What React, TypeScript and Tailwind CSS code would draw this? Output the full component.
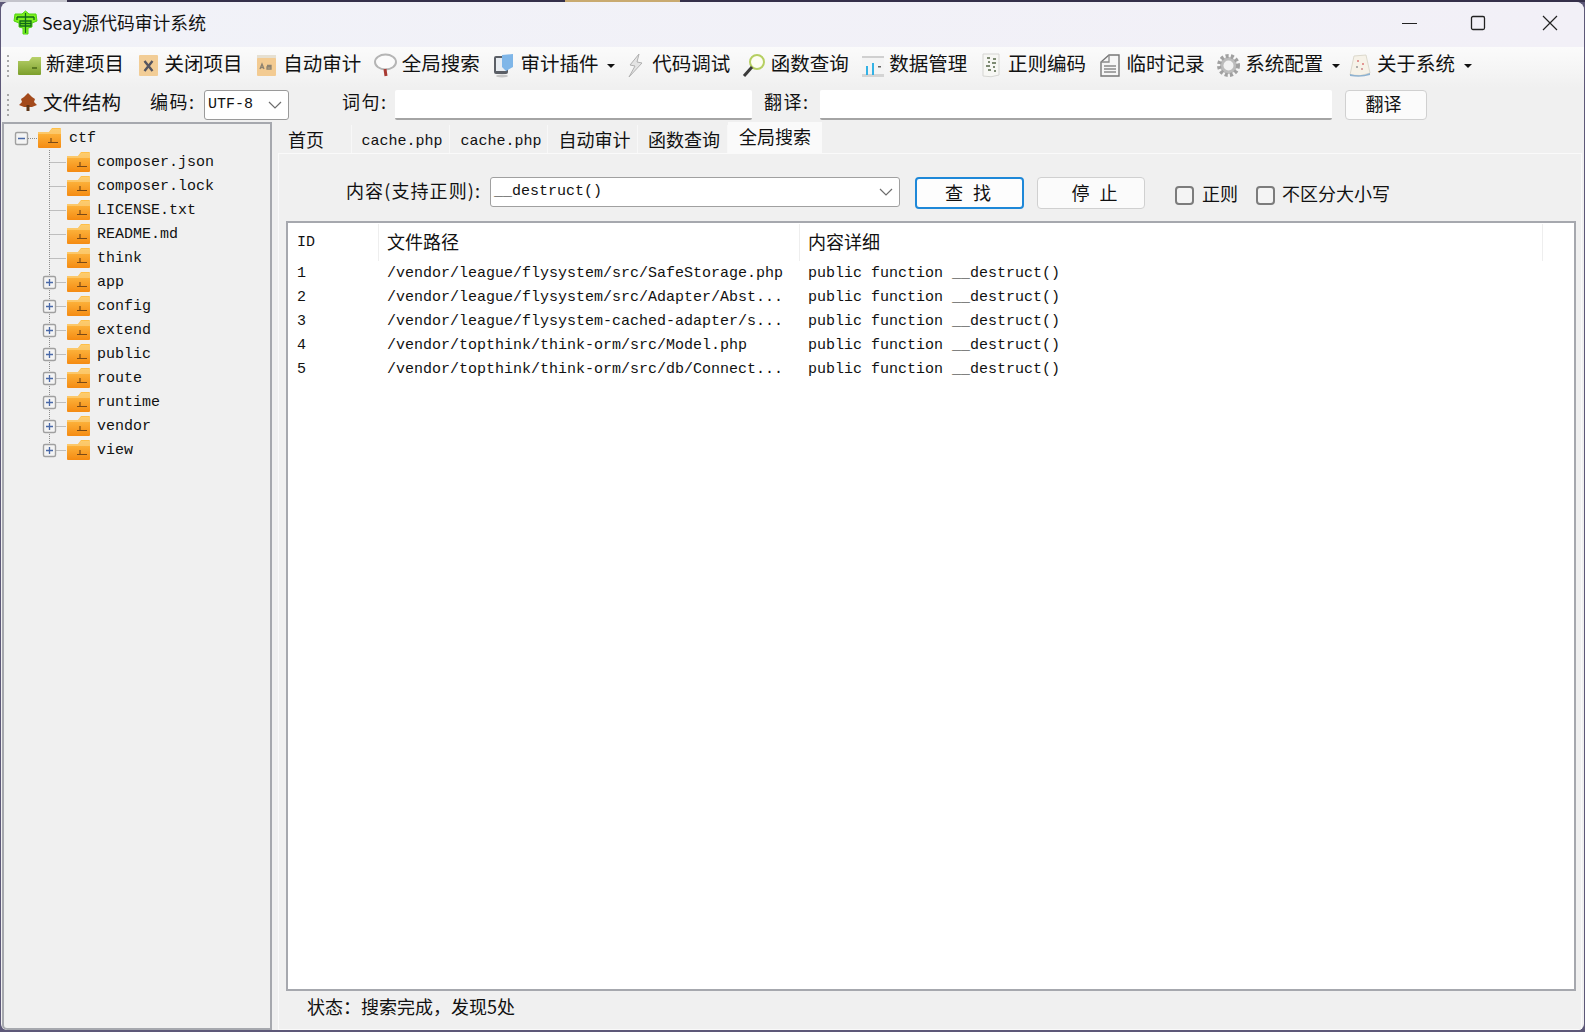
// Seay source audit window: title bar, two toolbars, file tree, global search tab
import React from 'react';

function AppIcon() {
  return (
    <svg width="25" height="25" viewBox="0 0 25 25" fill="none">
      <path d="M12.5 1 L16 4 L23 4 L24 11 L19 13 L19 17 L15 18 L15 24 L10 24 L10 18 L6 17 L6 13 L1 11 L2 4 L9 4 Z" fill="#7ef01e" stroke="#4fd410" strokeWidth="1" />
      <path d="M4 7 H21 M4 7 V10 M21 7 V10 M7 11 H18 V16 H7 Z M12.5 3 V23 M7 13.5 H18" stroke="#0f6a18" strokeWidth="1.3" />
    </svg>
  );
}

function NewIcon() {
  return (
    <svg width="25" height="20" viewBox="0 0 25 20">
      <defs>
        <linearGradient id="ng" x1="0" y1="0" x2="0" y2="1">
          <stop offset="0" stopColor="#b8d16a" />
          <stop offset="1" stopColor="#7c9f2c" />
        </linearGradient>
      </defs>
      <path d="M1 5 H12 L15 1 H24 V18 Q24 19 23 19 H2 Q1 19 1 18 Z" fill="url(#ng)" />
      <rect x="15" y="11" width="5" height="2" fill="#5b7a22" />
    </svg>
  );
}

function CloseProjectIcon() {
  return (
    <svg width="21" height="23" viewBox="0 0 21 23">
      <rect x="1" y="1" width="19" height="21" rx="1" fill="#f2cd96" />
      <path d="M6.5 7 L14.5 17 M14.5 7 L6.5 17" stroke="#555560" strokeWidth="2.4" />
    </svg>
  );
}

function AuditIcon() {
  return (
    <svg width="21" height="23" viewBox="0 0 21 23">
      <rect x="1" y="1" width="19" height="4" fill="#e6e0d2" />
      <rect x="1" y="4" width="19" height="18" rx="1" fill="#f3cb92" />
      <path d="M4 15 L6 10 L8 15 M5 13.5 H7 M11 11.5 H15 V15 H11 V13 H15" stroke="#8d8270" strokeWidth="1.3" fill="none" />
    </svg>
  );
}

function GlobeSearchIcon() {
  return (
    <svg width="25" height="25" viewBox="0 0 25 25">
      <ellipse cx="12.5" cy="9" rx="10.5" ry="7.5" fill="#fbfbfb" stroke="#b5b5b5" strokeWidth="2" />
      <path d="M12 16 L13 23" stroke="#a83a32" strokeWidth="3" />
    </svg>
  );
}

function PluginIcon() {
  return (
    <svg width="21" height="25" viewBox="0 0 21 25">
      <rect x="1" y="3" width="14" height="18" rx="2" fill="#5b5f66" />
      <rect x="3" y="5" width="10" height="13" fill="#e8edf2" />
      <path d="M9 2 L20 1 V14 L13 18 L9 14 Z" fill="#7fb6e8" />
      <ellipse cx="9" cy="23" rx="6" ry="1.5" fill="#c5c5c5" />
    </svg>
  );
}

function BoltIcon() {
  return (
    <svg width="18" height="25" viewBox="0 0 18 25">
      <path d="M12 1 L3 12 L8 13 L2 24 L15 10 L10 9 Z" fill="#e4e4e4" stroke="#b0b0b0" strokeWidth="1" />
    </svg>
  );
}

function MagnifierIcon() {
  return (
    <svg width="24" height="25" viewBox="0 0 24 25">
      <circle cx="15" cy="9" r="7" fill="#fdfdf2" stroke="#b6cf62" strokeWidth="2" />
      <path d="M10 14 L2 23" stroke="#3a3a3a" strokeWidth="3" />
    </svg>
  );
}

function DataIcon() {
  return (
    <svg width="24" height="24" viewBox="0 0 24 24">
      <rect x="1" y="2" width="22" height="2" fill="#d0d0d0" />
      <rect x="1" y="4" width="22" height="19" fill="#f4f4f4" />
      <rect x="1" y="20" width="22" height="3" fill="#d4d4d4" />
      <rect x="5" y="12" width="2" height="9" fill="#33b2e5" />
      <rect x="11" y="9" width="2" height="12" fill="#33b2e5" />
      <rect x="17" y="12" width="3" height="1.5" fill="#666" />
    </svg>
  );
}

function RegexIcon() {
  return (
    <svg width="20" height="26" viewBox="0 0 20 26">
      <path d="M2 1 H18 V22 Q10 25 2 23 Z" fill="#f7f7f4" stroke="#d5d5d2" />
      <path d="M6 5 h3 M12 6 h3 M7 9 h2 M11 10 h4 M5 13 h4 M12 14 h2 M7 17 h3 M13 18 h2" stroke="#7d8a72" strokeWidth="2" />
    </svg>
  );
}

function NoteIcon() {
  return (
    <svg width="22" height="25" viewBox="0 0 22 25" fill="none">
      <path d="M10 2 H20 V23 H2 V9 Z" fill="#f6f6f6" stroke="#777" strokeWidth="1.4" />
      <path d="M10 2 V9 H2 M5 13 H17 M5 16 H17 M5 19 H17" stroke="#8a8a8a" strokeWidth="1.3" />
    </svg>
  );
}

function GearIcon() {
  return (
    <svg width="25" height="25" viewBox="0 0 25 25" fill="none">
      <circle cx="12.5" cy="12.5" r="8.5" fill="#bcbcbc" />
      <circle cx="12.5" cy="12.5" r="9.5" stroke="#a0a0a0" strokeWidth="4" strokeDasharray="3 2.2" />
      <circle cx="12.5" cy="12.5" r="5" fill="#f2f2f2" />
    </svg>
  );
}

function AboutIcon() {
  return (
    <svg width="22" height="23" viewBox="0 0 22 23">
      <path d="M5 2 L17 1 L21 19 Q12 23 1 21 Z" fill="#f6f2e8" stroke="#dcd8cc" />
      <path d="M1 20 Q12 23 21 19 V21 Q12 24 1 22 Z" fill="#8fb2d0" />
      <circle cx="9" cy="7" r="1" fill="#d77" />
      <circle cx="14" cy="10" r="1" fill="#d77" />
      <circle cx="8" cy="13" r="1" fill="#999" />
      <circle cx="13" cy="15" r="1" fill="#c88" />
    </svg>
  );
}

function TreeIcon() {
  return (
    <svg width="20" height="20" viewBox="0 0 20 20">
      <path d="M10 1 L14 5 L17 7 L16 10 L19 13 L14 15 L6 15 L1 13 L4 10 L3 7 L6 5 Z" fill="#a34a1c" />
      <rect x="8.5" y="13" width="3" height="6" fill="#5d3417" />
    </svg>
  );
}

function FolderIcon() {
  return (
    <svg width="23" height="20" viewBox="0 0 23 20" className="shrink-0">
      <defs>
        <linearGradient id="fg" x1="0" y1="0" x2="0" y2="1">
          <stop offset="0" stopColor="#ffc04a" />
          <stop offset="1" stopColor="#f58b12" />
        </linearGradient>
      </defs>
      <path d="M0 4 H11 L14 0 H22 Q23 0 23 1 V19 Q23 20 22 20 H1 Q0 20 0 19 Z" fill="url(#fg)" />
      <path d="M0 4 H11 L14 1 H23 V6 H0 Z" fill="#fcd98e" opacity="0.55" />
      <path d="M13 10 V14 M10 14.5 H20" stroke="#7a4a16" strokeWidth="1.2" />
    </svg>
  );
}

function Caret() {
  return <span className="ml-[9px] w-0 h-0 border-x-[4px] border-x-transparent border-t-[4px] border-t-[#111]" />;
}

function Chevron({ className }: { className?: string }) {
  return (
    <svg width="14" height="8" viewBox="0 0 14 8" fill="none" className={className}>
      <path d="M1 1 L7 7 L13 1" stroke="#6d6d6d" strokeWidth="1.2" />
    </svg>
  );
}

function Grip() {
  return (
    <div className="flex flex-col gap-[3px] w-[3px] shrink-0 ml-[6px]">
      {[...Array(5)].map((_, i) => (
        <div key={i} className="w-[2px] h-[2px] bg-[#a8a8a8]" />
      ))}
    </div>
  );
}

// toolbar buttons
const tools = [
  { label: '新建项目', icon: <NewIcon /> },
  { label: '关闭项目', icon: <CloseProjectIcon /> },
  { label: '自动审计', icon: <AuditIcon /> },
  { label: '全局搜索', icon: <GlobeSearchIcon /> },
  { label: '审计插件', icon: <PluginIcon />, menu: true },
  { label: '代码调试', icon: <BoltIcon /> },
  { label: '函数查询', icon: <MagnifierIcon /> },
  { label: '数据管理', icon: <DataIcon /> },
  { label: '正则编码', icon: <RegexIcon /> },
  { label: '临时记录', icon: <NoteIcon /> },
  { label: '系统配置', icon: <GearIcon />, menu: true },
  { label: '关于系统', icon: <AboutIcon />, menu: true },
];

const treeFiles = ['composer.json', 'composer.lock', 'LICENSE.txt', 'README.md', 'think'];
const treeDirs = ['app', 'config', 'extend', 'public', 'route', 'runtime', 'vendor', 'view'];

const results = [
  '/vendor/league/flysystem/src/SafeStorage.php',
  '/vendor/league/flysystem/src/Adapter/Abst...',
  '/vendor/league/flysystem-cached-adapter/s...',
  '/vendor/topthink/think-orm/src/Model.php',
  '/vendor/topthink/think-orm/src/db/Connect...',
];

// dotted connector + optional plus box in front of a tree row
function TreeGutter({ plus, last }: { plus?: boolean; last?: boolean }) {
  return (
    <svg width="63" height="24" viewBox="0 0 63 24" className="shrink-0">
      <path d={last ? 'M45.5 0 V12' : 'M45.5 0 V24'} stroke="#8c8c8c" strokeDasharray="1 1" />
      <path d="M45.5 12.5 H62" stroke="#8c8c8c" strokeDasharray="1 1" />
      {plus && (
        <>
          <rect x="39.5" y="6.5" width="12" height="12" rx="1.5" fill="#f4f4f4" stroke="#a0a0a0" strokeWidth="1.4" />
          <path d="M42 12.5 H49 M45.5 9 V16" stroke="#4a69a8" strokeWidth="1.3" />
        </>
      )}
    </svg>
  );
}

function ResultRow({ id, path }: { id: number; path: string }) {
  return (
    <div className="flex h-[24px] items-center">
      <div className="w-[99px] pl-[9px]">{id}</div>
      <div className="w-[421px] whitespace-pre">{path}</div>
      <div className="whitespace-pre">public function __destruct()</div>
    </div>
  );
}

export default function App() {
  return (
    <div className="w-[1585px] h-[1032px] flex flex-col overflow-hidden bg-[#5d5878] font-['Noto_Sans_CJK_SC',sans-serif] text-[#111]">
      {/* desktop peeking out above the window */}
      <div className="flex h-[2px] shrink-0 bg-[#35304a]">
        <div className="w-[67px] bg-[#c4c4cc]" />
        <div className="w-[498px]" />
        <div className="w-[115px] bg-[#c9aa70]" />
      </div>

      <div className="flex-1 min-h-0 flex flex-col mx-[1px] mb-[2px] rounded-t-[8px] rounded-b-[6px] overflow-hidden bg-[#f0f0f0]">
        {/* title bar */}
        <div className="h-[45px] shrink-0 flex items-center bg-[linear-gradient(90deg,#f1f2f8,#f2f0f7)]">
          <div className="ml-[12px] mt-[-4px]"><AppIcon /></div>
          <span className="ml-[4px] text-[17.8px] leading-none mt-[-3px]">Seay源代码审计系统</span>
          <div className="ml-auto flex items-center mt-[-3px]">
            <svg width="16" height="16" viewBox="0 0 16 16" fill="none" className="mr-[52px]">
              <path d="M0 8.5 H15" stroke="#222" />
            </svg>
            <svg width="16" height="16" viewBox="0 0 16 16" fill="none" className="mr-[56px]">
              <rect x="1.5" y="1.5" width="13" height="13" rx="1.5" stroke="#222" strokeWidth="1.3" />
            </svg>
            <svg width="16" height="16" viewBox="0 0 16 16" fill="none" className="mr-[26px]">
              <path d="M1 1 L15 15 M15 1 L1 15" stroke="#222" strokeWidth="1.2" />
            </svg>
          </div>
        </div>

        {/* main toolbar */}
        <div className="h-[41px] shrink-0 flex items-center pb-[4px] bg-[linear-gradient(180deg,#fbfbfb,#f0f0f0)]">
          <Grip />
          <div className="flex items-center ml-[3px] text-[19.5px] leading-none">
            {tools.map((t) => (
              <div key={t.label} className={t.menu ? 'w-[131.8px] flex items-center' : 'w-[118.6px] flex items-center'}>
                <div className="w-[33px] h-[26px] flex items-center justify-center shrink-0">{t.icon}</div>
                <span className="whitespace-nowrap mt-[-5px]">{t.label}</span>
                {t.menu && <Caret />}
              </div>
            ))}
          </div>
        </div>

        {/* second toolbar */}
        <div className="h-[34px] shrink-0 flex items-center">
          <Grip />
          <div className="ml-[8px] mt-[-6px]"><TreeIcon /></div>
          <span className="ml-[5px] text-[19.5px] leading-none mt-[-7px]">文件结构</span>
          <span className="ml-[29px] text-[18px] w-[54px] tracking-[1.5px] mt-[-7px]">编码:</span>
          <div className="w-[85px] h-[30px] flex items-center justify-between bg-white border border-[#9a9a9a] rounded-[3px] pl-[3px] pr-[6px] font-['Liberation_Mono','Noto_Sans_CJK_SC',monospace] text-[15px]">
            <span>UTF-8</span>
            <Chevron />
          </div>
          <span className="ml-[53px] text-[18px] w-[53px] tracking-[1.5px] mt-[-7px]">词句:</span>
          <div className="w-[357px] h-[30px] bg-white border-b-2 border-[#a4a4a4] rounded-[2px]" />
          <span className="ml-[12px] text-[18px] w-[56px] tracking-[1.5px] mt-[-7px]">翻译:</span>
          <div className="w-[512px] h-[30px] bg-white border-b-2 border-[#a4a4a4] rounded-[2px]" />
          <button className="ml-[13px] w-[82px] h-[30px] bg-[#fbfbfb] border border-[#d0d0d0] rounded-[4px] text-[18px] leading-none pb-[4px] pr-[5px]">翻译</button>
        </div>

        {/* body */}
        <div className="flex-1 min-h-0 flex">
          {/* file tree */}
          <div className="w-[270px] ml-[1px] shrink-0 border-2 border-[#a6a8ae] rounded-bl-[5px] pt-[2px] bg-[#f0f0f0] font-['Liberation_Mono','Noto_Sans_CJK_SC',monospace] text-[15px] leading-none">
            <div className="flex items-center h-[24px]">
              <svg width="34" height="24" viewBox="0 0 34 24" className="shrink-0">
                <rect x="11.5" y="6.5" width="12" height="12" rx="1.5" fill="#f4f4f4" stroke="#a0a0a0" strokeWidth="1.4" />
                <path d="M14 12.5 H21" stroke="#4a69a8" strokeWidth="1.4" />
                <path d="M24 12.5 H34" stroke="#8c8c8c" strokeDasharray="1 1" />
              </svg>
              <FolderIcon />
              <span className="ml-[8px]">ctf</span>
            </div>
            {treeFiles.map((name) => (
              <div key={name} className="flex items-center h-[24px]">
                <TreeGutter />
                <FolderIcon />
                <span className="ml-[7px]">{name}</span>
              </div>
            ))}
            {treeDirs.map((name, i) => (
              <div key={name} className="flex items-center h-[24px]">
                <TreeGutter plus last={i === treeDirs.length - 1} />
                <FolderIcon />
                <span className="ml-[7px]">{name}</span>
              </div>
            ))}
          </div>

          {/* tabbed area */}
          <div className="flex-1 min-w-0 ml-[6px] mr-[2px] flex flex-col">
            <div className="h-[31px] shrink-0 flex items-end">
              <div className="w-[74px] h-[28px] flex items-center pl-[10px] text-[18px] border-r border-[#f8f8f8]">首页</div>
              <div className="w-[98px] h-[28px] flex items-center justify-center pl-[3px] pt-[7px] border-r border-[#f8f8f8] font-['Liberation_Mono',monospace] text-[15px]">cache.php</div>
              <div className="w-[98px] h-[28px] flex items-center justify-center pl-[5px] pt-[7px] border-r border-[#f8f8f8] font-['Liberation_Mono',monospace] text-[15px]">cache.php</div>
              <div className="w-[90px] h-[28px] flex items-center justify-center pl-[4px] text-[18px] border-r border-[#f8f8f8]">自动审计</div>
              <div className="w-[90px] h-[28px] flex items-center justify-center pl-[3px] text-[18px] border-r border-[#f8f8f8]">函数查询</div>
              <div className="w-[94px] h-[31px] flex items-center justify-center pb-[3px] text-[18px] bg-[#fafafa]">全局搜索</div>
            </div>
            <div className="flex-1 min-h-0 flex flex-col bg-[#f0f0f0] border border-[#fafafa] pb-[4px]">
              {/* search bar */}
              <div className="h-[67px] shrink-0 flex items-center pt-[9px] text-[18px]">
                <span className="ml-[67px] w-[144px] whitespace-nowrap tracking-[1.1px] mt-[-4px]">内容(支持正则):</span>
                <div className="w-[410px] h-[30px] flex items-center justify-between bg-white border border-[#a0a0a0] rounded-[3px] pl-[3px] pr-[6px] font-['Liberation_Mono',monospace] text-[15px]">
                  <span>__destruct()</span>
                  <Chevron />
                </div>
                <button className="ml-[15px] w-[109px] h-[32px] mt-[1px] bg-[#fdfdfd] border-2 border-[#1e88d8] rounded-[4px] leading-none whitespace-pre tracking-[3px] pb-[2px]">查 找</button>
                <button className="ml-[13px] w-[108px] h-[32px] mt-[1px] bg-[#fbfbfb] border border-[#d0d0d0] rounded-[4px] leading-none whitespace-pre tracking-[3px] pl-[10px] pb-[2px]">停 止</button>
                <div className="ml-[30px] mt-[6px] w-[19px] h-[19px] rounded-[4px] border-2 border-[#7c7c7c] bg-[#f4f4f4]" />
                <span className="ml-[8px] mt-[3px]">正则</span>
                <div className="ml-[18px] mt-[6px] w-[19px] h-[19px] rounded-[4px] border-2 border-[#7c7c7c] bg-[#f4f4f4]" />
                <span className="ml-[7px] mt-[3px]">不区分大小写</span>
              </div>

              {/* results list */}
              <div className="flex-1 min-h-0 ml-[7px] mr-[5px] bg-white border-2 border-[#a6a8ae] font-['Liberation_Mono','Noto_Sans_CJK_SC',monospace] text-[15px] leading-none">
                <div className="h-[37px] mt-[1px] flex">
                  <div className="w-[91px] flex items-center pl-[9px] border-r border-[#eeeeee]">ID</div>
                  <div className="w-[421px] flex items-center pl-[8px] pb-[4px] border-r border-[#eeeeee] font-['Noto_Sans_CJK_SC',sans-serif] text-[18px]">文件路径</div>
                  <div className="w-[743px] flex items-center pl-[8px] pb-[4px] border-r border-[#eeeeee] font-['Noto_Sans_CJK_SC',sans-serif] text-[18px]">内容详细</div>
                </div>
                <div>
                  {results.map((path, i) => (
                    <ResultRow key={i} id={i + 1} path={path} />
                  ))}
                </div>
              </div>

              <div className="h-[34px] shrink-0 flex items-center pl-[28px] pb-[4px] text-[18px]">{'状态\uFF1A搜索完成\uFF0C发现5处'}</div>
            </div>
          </div>
        </div>
      </div>
    </div>
  );
}
